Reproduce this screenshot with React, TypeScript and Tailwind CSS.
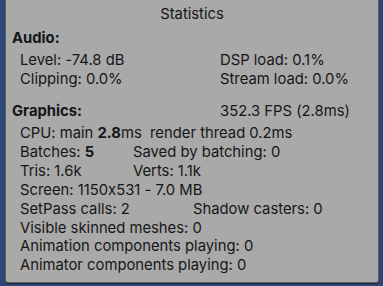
import React from 'react'

function Row({ children }: { children: React.ReactNode }) {
  return <div className="flex h-[18.9px] items-center pl-[14px] whitespace-nowrap">{children}</div>
}

export default function App() {
  return (
    <div className="w-[383px] h-[286px] bg-[#2b4776] overflow-hidden font-['Inter','Liberation_Sans',sans-serif] text-[14.8px] text-[#161616] [font-feature-settings:'calt'_0]">
      <div className="ml-[5px] mr-[4px] h-[283px] bg-[#a9a9a9] border-x border-b border-[#5f5f5f] rounded-b-[3px] shadow-[0_1px_1px_rgba(0,0,0,0.5)]">
        <div className="h-[28px] flex items-center justify-center pt-[1px]">Statistics</div>
        <div className="pl-[6px] h-[20px] flex items-center font-bold">Audio:</div>
        <div className="mt-[3px]">
          <Row>
            <span className="w-[200px]">Level: -74.8 dB</span>
            <span>DSP load: 0.1%</span>
          </Row>
          <Row>
            <span className="w-[200px]">Clipping: 0.0%</span>
            <span>Stream load: 0.0%</span>
          </Row>
        </div>
        <div className="mt-[12px] flex h-[20px] items-center whitespace-nowrap">
          <span className="pl-[6px] w-[214px] font-bold">Graphics:</span>
          <span>352.3 FPS (2.8ms)</span>
        </div>
        <div className="mt-[3px]">
          <Row>
            <span>
              CPU: main <b>2.8</b>ms&nbsp; render thread 0.2ms
            </span>
          </Row>
          <Row>
            <span className="w-[113px]">
              Batches: <b>5</b>
            </span>
            <span>Saved by batching: 0</span>
          </Row>
          <Row>
            <span className="w-[113px]">Tris: 1.6k</span>
            <span>Verts: 1.1k</span>
          </Row>
          <Row>
            <span>Screen: 1150x531 - 7.0 MB</span>
          </Row>
          <Row>
            <span className="w-[173px]">SetPass calls: 2</span>
            <span>Shadow casters: 0</span>
          </Row>
          <Row>
            <span>Visible skinned meshes: 0</span>
          </Row>
          <Row>
            <span>Animation components playing: 0</span>
          </Row>
          <Row>
            <span>Animator components playing: 0</span>
          </Row>
        </div>
      </div>
    </div>
  )
}
